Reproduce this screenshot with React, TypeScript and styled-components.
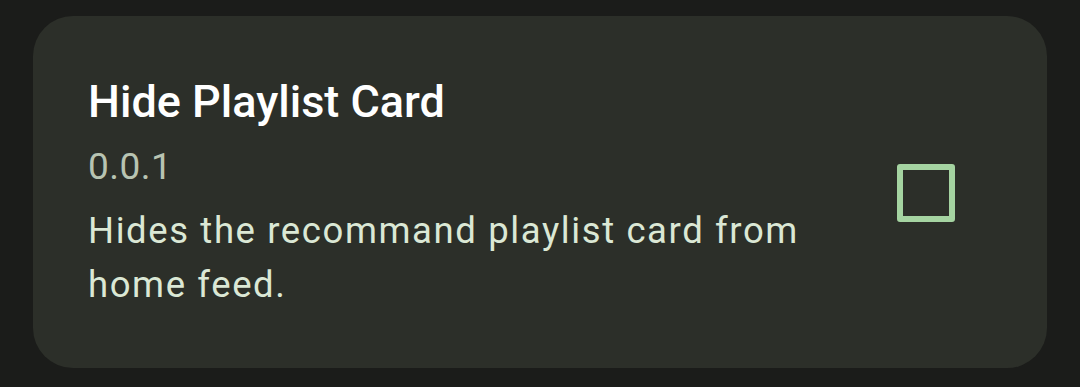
import styled, { createGlobalStyle } from 'styled-components';

const GlobalStyle = createGlobalStyle`
  html, body {
    margin: 0;
    padding: 0;
    background: #1b1c1a;
    font-family: Roboto, "Noto Sans", "Liberation Sans", sans-serif;
  }
`;

const Page = styled.div`
  width: 1080px;
  height: 387px;
  box-sizing: border-box;
  padding: 16px 33px 19px 33px;
`;

const Card = styled.div`
  background: #2c2f29;
  border-radius: 40px;
  height: 352px;
  box-sizing: border-box;
  padding: 58px 60px 56px 55px;
  display: flex;
  align-items: center;
  gap: 64px;
`;

const Info = styled.div`
  flex: 1;
  display: flex;
  flex-direction: column;
  gap: 10px;
`;

const Title = styled.h2`
  margin: 0;
  font-size: 45px;
  line-height: 56px;
  font-weight: 500;
  color: #ffffff;
`;

const Version = styled.div`
  font-size: 37px;
  line-height: 54px;
  color: #b8c4b2;
  letter-spacing: 0.5px;
`;

const Description = styled.p`
  margin: 0;
  font-size: 36.5px;
  line-height: 54px;
  color: #dbe8d5;
  letter-spacing: 1.6px;
`;

const CheckBox = styled.button`
  width: 58px;
  height: 58px;
  margin-right: 32px;
  flex-shrink: 0;
  box-sizing: border-box;
  border: 6px solid #a5d4a1;
  border-radius: 3px;
  background: transparent;
  padding: 0;
  cursor: pointer;
`;

export default function App() {
  return (
    <>
      <GlobalStyle />
      <Page>
        <Card>
          <Info>
            <Title>Hide Playlist Card</Title>
            <Version>0.0.1</Version>
            <Description>Hides the recommand playlist card from home feed.</Description>
          </Info>
          <CheckBox aria-label="Enable" />
        </Card>
      </Page>
    </>
  );
}
